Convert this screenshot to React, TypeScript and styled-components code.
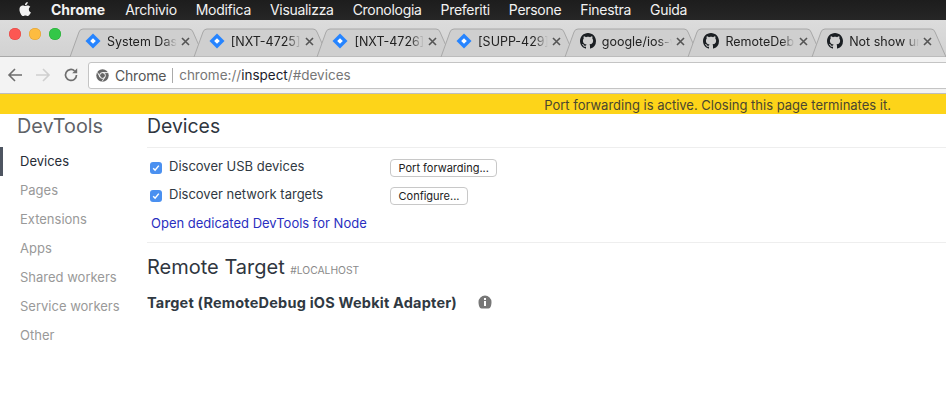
import React from "react";
import styled, { createGlobalStyle } from "styled-components";

const Global = createGlobalStyle`
  html, body { margin: 0; padding: 0; background: #fff; overflow: hidden; }
  body { font-family: Inter, "Liberation Sans", sans-serif; width: 946px; height: 404px; }
  #root { width: 946px; height: 404px; }
`;

const Page = styled.div`display: flex; flex-direction: column; width: 946px; height: 404px; overflow: hidden;`;

const MenuBar = styled.div`
  height: 20px; background: linear-gradient(#1d1d1d, #262626); display: flex; align-items: center;
  color: #f2f2f2; font-size: 14px; line-height: 18px; padding-left: 18px;
`;
const AppleSlot = styled.svg`width: 13px; height: 16px; margin-right: 20px; flex: none; margin-top: -2px;`;
const MenuItem = styled.span<{ $bold?: boolean; $gap: number }>`
  font-weight: ${p => (p.$bold ? 700 : 400)}; margin-right: ${p => p.$gap}px; white-space: nowrap;
  letter-spacing: ${p => (p.$bold ? "0" : "-0.3px")};
`;

const TabStrip = styled.div`
  height: 37px; background: linear-gradient(#dcdcdc, #d2d2d2); border-bottom: 1px solid #a9a9a9; box-sizing: border-box;
  display: flex; align-items: flex-end; padding-left: 69px; position: relative;
`;
const Lights = styled.div`position: absolute; left: 9px; top: 8px; display: flex; gap: 8px;`;
const Light = styled.span<{ $c: string; $b: string }>`
  width: 12px; height: 12px; border-radius: 50%; background: ${p => p.$c}; box-shadow: inset 0 0 0 0.5px ${p => p.$b};
`;
const TabEl = styled.div`
  width: 123.7px; flex: none; height: 28px; position: relative; display: flex; align-items: center; padding: 0 0 2px 16px;
  box-sizing: border-box; font-size: 12.5px; color: #222;
`;
const TabShape = styled.svg`position: absolute; left: 0; bottom: -1px; width: 136px; height: 29px; pointer-events: none;`;
const TabIcon = styled.svg`width: 16px; height: 16px; flex: none; position: relative; margin-right: 6px;`;
const TabTitle = styled.span`
  width: 70px; overflow: hidden; white-space: nowrap; position: relative; flex: none;
  -webkit-mask-image: linear-gradient(90deg, #000 80%, transparent 100%);
  mask-image: linear-gradient(90deg, #000 80%, transparent 100%);
`;
const TabClose = styled.svg`width: 9px; height: 9px; flex: none; position: relative; margin-left: 4px;`;

const Toolbar = styled.div`
  height: 37px; background: #f3f3f3; border-bottom: 1px solid #bdbdbd; box-sizing: border-box;
  display: flex; align-items: center; padding-left: 7px;
`;
const NavIcon = styled.svg`width: 16px; height: 16px; flex: none; margin-right: 12px;`;
const Omni = styled.div`
  margin-left: -3px; flex: 1; height: 27px; margin-right: -20px; background: #fff; border: 1px solid #c4c4c4; border-radius: 3px; box-sizing: border-box;
  display: flex; align-items: center; padding-left: 7px; font-size: 13.5px; color: #777;
`;
const Globe = styled.svg`width: 13px; height: 13px; flex: none; margin-right: 6px;`;
const OmniChip = styled.span`color: #555; font-size: 14px; padding-right: 6px; margin-right: 6px; border-right: 1px solid #aaa; line-height: 15px; letter-spacing: -0.2px;`;
const OmniDark = styled.span`color: #1b1b2b;`;

const Infobar = styled.div`
  height: 20px; background: #fdd419; font-size: 13px; color: #4a4630; text-align: right; padding-right: 55px; line-height: 22px; flex: none;
`;

const Body = styled.div`flex: 1; display: flex; min-height: 0;`;
const Side = styled.nav`width: 133px; flex: none; display: flex; flex-direction: column;`;
const SideTitle = styled.div`font-size: 19.8px; color: #5f6368; padding-left: 17px; height: 33px; line-height: 24px;`;
const SideItem = styled.div<{ $on?: boolean }>`
  height: 29px; line-height: 29px; font-size: 13px; padding-left: ${p => (p.$on ? 17 : 20)}px;
  color: ${p => (p.$on ? "#262c36" : "#999")}; border-left: ${p => (p.$on ? "3px solid #4e5561" : "none")};
`;
const Main = styled.main`flex: 1; padding-left: 14px; min-width: 0;`;
const H1 = styled.div`font-size: 19.4px; color: #2f3640; height: 33px; margin-bottom: 6px; line-height: 24px; border-bottom: 1px solid #eee; box-sizing: content-box;`;
const Row = styled.div`height: 28px; display: flex; align-items: center; font-size: 13px; color: #303942;`;
const Check = styled.span`
  width: 12px; height: 12px; border-radius: 3px; background: #4a90f0; margin: 0 7px 0 3px; display: flex; align-items: center; justify-content: center; flex: none;
`;
const Label = styled.span`width: 221px; flex: none; margin-bottom: 4px;`;
const Btn = styled.button`
  height: 18px; padding: 0 7.5px; font: 11px Inter, sans-serif; color: #222; background: #fff; border: 1px solid #c8c8c8; border-radius: 4px; margin: 0; line-height: 16px;
`;
const LinkText = styled.div`font-size: 13px; color: #2a2fc0; padding-left: 4px; height: 32px; line-height: 26px; border-bottom: 1px solid #eee;`;
const H2Row = styled.div`display: flex; align-items: baseline; margin-top: 12px; height: 24px;`;
const H2 = styled.span`font-size: 20px; color: #2f3640; line-height: 24px;`;
const Hash = styled.span`font-size: 10.3px; color: #8a8a8a; margin-left: 5.5px;`;
const TargetRow = styled.div`display: flex; align-items: center; margin-top: 14px; height: 18px;`;
const TargetName = styled.span`font-size: 14.5px; font-weight: 700; color: #303942; letter-spacing: 0.2px;`;
const InfoIcon = styled.svg`width: 14px; height: 14px; margin-left: 21px; flex: none;`;

const Jira = () => (
  <TabIcon viewBox="0 0 16 16">
    <path d="M8 0.5 15.5 8 8 15.5 0.5 8Z" fill="#2684ff" />
    <path d="M8 5.2 10.8 8 8 10.8 5.2 8Z" fill="#fff" />
  </TabIcon>
);
const Git = () => (
  <TabIcon viewBox="0 0 16 16">
    <path fill="#1b1f23" d="M8 0C3.58 0 0 3.58 0 8c0 3.54 2.29 6.53 5.47 7.59.4.07.55-.17.55-.38 0-.19-.01-.82-.01-1.49-2.01.37-2.53-.49-2.69-.94-.09-.23-.48-.94-.82-1.13-.28-.15-.68-.52-.01-.53.63-.01 1.08.58 1.23.82.72 1.21 1.87.87 2.33.66.07-.52.28-.87.51-1.07-1.78-.2-3.64-.89-3.64-3.95 0-.87.31-1.59.82-2.15-.08-.2-.36-1.02.08-2.12 0 0 .67-.21 2.2.82.64-.18 1.32-.27 2-.27s1.36.09 2 .27c1.53-1.04 2.2-.82 2.2-.82.44 1.1.16 1.92.08 2.12.51.56.82 1.27.82 2.15 0 3.07-1.87 3.75-3.65 3.95.29.25.54.73.54 1.48 0 1.07-.01 1.93-.01 2.2 0 .21.15.46.55.38A8.01 8.01 0 0 0 16 8c0-4.42-3.58-8-8-8z" />
  </TabIcon>
);

const tabs: { t: string; k: "j" | "g" }[] = [
  { t: "System Dash", k: "j" },
  { t: "[NXT-4725]", k: "j" },
  { t: "[NXT-4726]", k: "j" },
  { t: "[SUPP-429]", k: "j" },
  { t: "google/ios-w", k: "g" },
  { t: "RemoteDebu", k: "g" },
  { t: "Not show url", k: "g" },
];

const Tab = ({ t, k }: { t: string; k: "j" | "g" }) => (
  <TabEl>
    <TabShape viewBox="0 0 136 29">
      <path d="M1 29 10 4Q11 1 14 1H120Q123 1 124 4L135 29Z" fill="#cfcfcf" stroke="#a8a8a8" strokeWidth="1" />
    </TabShape>
    {k === "j" ? <Jira /> : <Git />}
    <TabTitle>{t}</TabTitle>
    <TabClose viewBox="0 0 9 9">
      <path d="M1 1 8 8M8 1 1 8" stroke="#555" strokeWidth="1.6" />
    </TabClose>
  </TabEl>
);

const menus: [string, number, boolean?][] = [
  ["Chrome", 20, true], ["Archivio", 19], ["Modifica", 19], ["Visualizza", 19], ["Cronologia", 19],
  ["Preferiti", 19], ["Persone", 19], ["Finestra", 19], ["Guida", 0],
];

const sideItems = ["Pages", "Extensions", "Apps", "Shared workers", "Service workers", "Other"];

const CheckMark = () => (
  <Check>
    <svg width="8" height="8" viewBox="0 0 8 8"><path d="M1.2 4.2 3.1 6.2 6.8 1.6" fill="none" stroke="#fff" strokeWidth="1.5" /></svg>
  </Check>
);

export default function App() {
  return (
    <Page>
      <Global />
      <MenuBar>
        <AppleSlot viewBox="0 0 13 16">
          <path fill="#f2f2f2" d="M10.8 8.4c0-1.7 1.4-2.5 1.5-2.6-.8-1.2-2-1.3-2.5-1.4-1-.1-2 .6-2.6.6-.5 0-1.4-.6-2.3-.6-1.2 0-2.3.7-2.9 1.7-1.2 2.2-.3 5.4.9 7.1.6.9 1.3 1.8 2.2 1.8.9 0 1.2-.6 2.3-.6 1.1 0 1.4.6 2.3.6 1 0 1.6-.9 2.2-1.7.7-1 1-2 1-2.1-.1 0-2.1-.8-2.1-2.8zM9 3.2c.5-.6.8-1.4.7-2.2-.7 0-1.5.5-2 1.1-.4.5-.8 1.3-.7 2.1.8.1 1.5-.4 2-1z" />
        </AppleSlot>
        {menus.map(([m, g, b]) => <MenuItem key={m} $bold={b} $gap={g}>{m}</MenuItem>)}
      </MenuBar>
      <TabStrip>
        <Lights>
          <Light $c="#fc5753" $b="#df4744" />
          <Light $c="#fdbc40" $b="#de9f34" />
          <Light $c="#33c748" $b="#27aa35" />
        </Lights>
        {tabs.map(x => <Tab key={x.t} {...x} />)}
      </TabStrip>
      <Toolbar>
        <NavIcon viewBox="0 0 16 16"><path d="M15 8H2M8 2 2 8l6 6" fill="none" stroke="#6e6e6e" strokeWidth="1.6" /></NavIcon>
        <NavIcon viewBox="0 0 16 16"><path d="M1 8h13M8 2l6 6-6 6" fill="none" stroke="#cfcfcf" strokeWidth="1.6" /></NavIcon>
        <NavIcon viewBox="0 0 16 16"><path d="M13.5 8A5.5 5.5 0 1 1 11.6 3.8" fill="none" stroke="#6e6e6e" strokeWidth="1.7" /><path d="M14.2 1.2v5h-5z" fill="#6e6e6e" /></NavIcon>
        <Omni>
          <Globe viewBox="0 0 13 13">
            <circle cx="6.5" cy="6.5" r="6.2" fill="#666" />
            <circle cx="6.5" cy="6.5" r="2.9" fill="#666" stroke="#fff" strokeWidth="1" />
            <path d="M6.5 3.6H12M4 8 1.5 3.4M8.6 8.4 6 12.6" stroke="#fff" strokeWidth="0.9" fill="none" />
          </Globe>
          <OmniChip>Chrome</OmniChip>
          <span>chrome://<OmniDark>inspect</OmniDark>/#devices</span>
        </Omni>
      </Toolbar>
      <Infobar>Port forwarding is active. Closing this page terminates it.</Infobar>
      <Body>
        <Side>
          <SideTitle>DevTools</SideTitle>
          <SideItem $on>Devices</SideItem>
          {sideItems.map(s => <SideItem key={s}>{s}</SideItem>)}
        </Side>
        <Main>
          <H1>Devices</H1>
          <Row><CheckMark /><Label>Discover USB devices</Label><Btn>Port forwarding...</Btn></Row>
          <Row><CheckMark /><Label>Discover network targets</Label><Btn>Configure...</Btn></Row>
          <LinkText>Open dedicated DevTools for Node</LinkText>
          <H2Row><H2>Remote Target</H2><Hash>#LOCALHOST</Hash></H2Row>
          <TargetRow>
            <TargetName>Target (RemoteDebug iOS Webkit Adapter)</TargetName>
            <InfoIcon viewBox="0 0 14 14">
              <path d="M7 0.5a6.5 6.5 0 0 1 6.5 6.5c0 3-1 6.5-3 6.5H3.5c-2 0-3-3.5-3-6.5A6.5 6.5 0 0 1 7 0.5z" fill="#777" />
              <rect x="6" y="6" width="2" height="5" fill="#fff" />
              <rect x="6" y="3" width="2" height="2" fill="#fff" />
            </InfoIcon>
          </TargetRow>
        </Main>
      </Body>
    </Page>
  );
}
